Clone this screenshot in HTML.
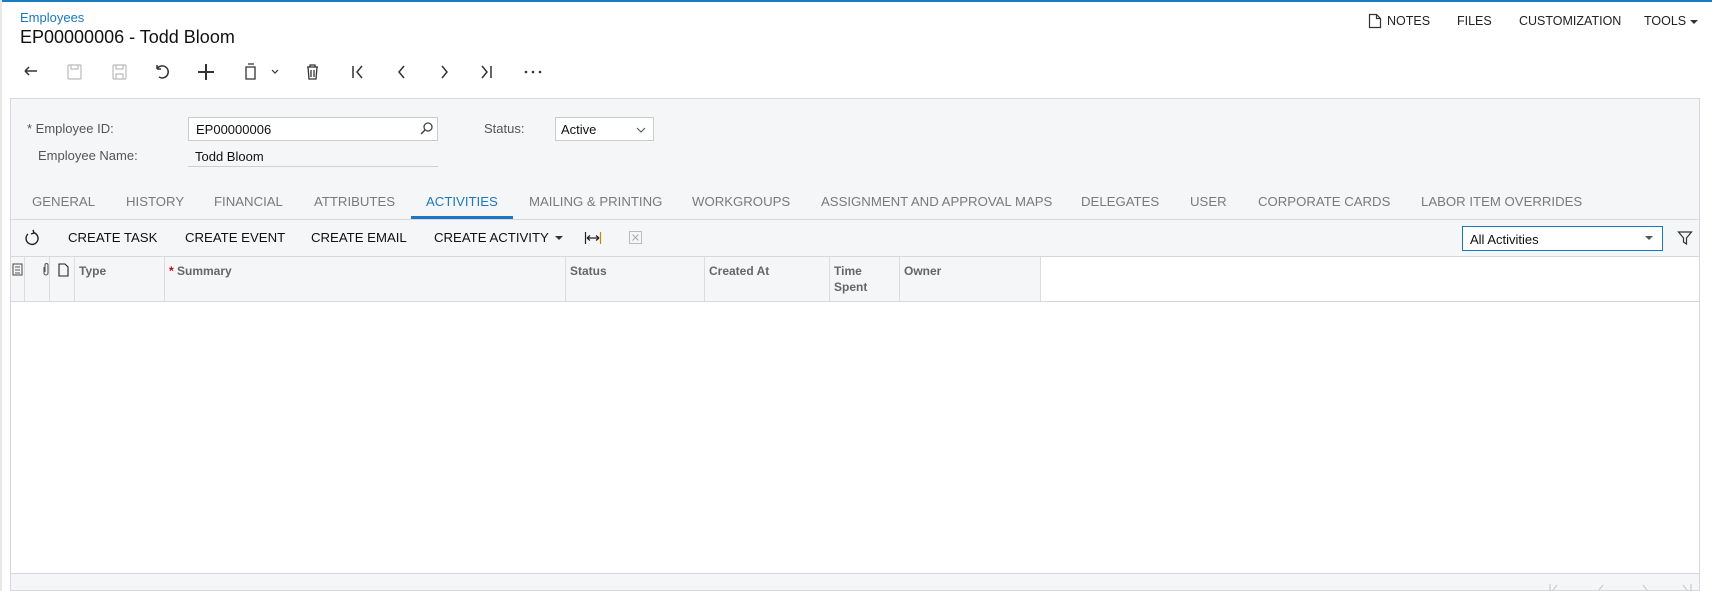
<!DOCTYPE html>
<html><head><meta charset="utf-8"><style>
*{margin:0;padding:0;box-sizing:border-box}
body{width:1712px;height:591px;background:#fff;font-family:"Liberation Sans",Arial,sans-serif;position:relative;overflow:hidden;color:#222}
.a{position:absolute;white-space:nowrap}
.tb{font-size:12.5px;color:#222;top:14px}
.tab{position:absolute;top:194px;font-size:13.2px;color:#7a7a7a}
.gt{position:absolute;top:230px;font-size:13.2px;color:#111}
.hd{position:absolute;top:257px;height:44px;border-right:1px solid #dcdcdc;font-size:12px;font-weight:bold;color:#666;padding:6px 4px;line-height:16px}
</style></head><body>
<div class="a" style="left:0;top:0;width:1712px;height:2px;background:#1a7bbf"></div>
<div class="a" style="left:0;top:0;width:2px;height:591px;background:#e8e8e8"></div>
<div class="a" style="left:20px;top:10px;font-size:13px;color:#1a78c2">Employees</div>
<div class="a" style="left:20px;top:27px;font-size:18px;color:#111">EP00000006 - Todd Bloom</div>

<svg class="a" style="left:1368px;top:13px" width="14" height="16" viewBox="0 0 14 16"><path d="M1.5 1.5h7l4 4v9h-11z M8.5 1.5v4h4" fill="none" stroke="#333" stroke-width="1.2"/></svg>
<div class="a tb" style="left:1387px">NOTES</div>
<div class="a tb" style="left:1457px">FILES</div>
<div class="a tb" style="left:1519px">CUSTOMIZATION</div>
<div class="a tb" style="left:1644px">TOOLS</div>
<div class="a" style="left:1690px;top:20px;border:4px solid transparent;border-top:4px solid #333;border-bottom:0"></div>

<svg class="a" style="left:0;top:60px" width="560" height="24" viewBox="0 0 560 24" fill="none" stroke="#333" stroke-width="1.5">
<path d="M25 11h12M25 11l4-4M25 11l4 4"/>
<g stroke="#bbb" stroke-width="1.2"><rect x="68" y="5" width="13" height="14" rx="1"/><path d="M71 5v4h7V5"/><rect x="113" y="5" width="13" height="14" rx="1"/><path d="M116 5v4h7V5M116 19v-5h7v5"/></g>
<path d="M157 9a6 6 0 1 1 2 8M157 9v-4M157 9h4"/>
<path d="M206 4v16M198 12h16" stroke-width="2"/>
<path d="M246 7h9v12h-9z M248 4h6" stroke-width="1.3"/><path d="M272 10l3 3 3-3" stroke-width="1.2"/>
<path d="M307 7h11M310 7v-2h5v2M308 7l1 12h7l1-12M311 10v7M314 10v7" stroke-width="1.3"/>
<path d="M353 6v12M362 6l-5 6 5 6"/>
<path d="M404 6l-5 6 5 6"/>
<path d="M442 6l5 6-5 6"/>
<path d="M482 6l5 6-5 6M491 6v12"/>
<g fill="#333" stroke="none"><circle cx="526" cy="12" r="1.3"/><circle cx="533" cy="12" r="1.3"/><circle cx="540" cy="12" r="1.3"/></g>
</svg>

<div class="a" style="left:10px;top:98px;width:1690px;height:493px;background:#f5f6f8;border:1px solid #d6d8db"></div>
<div class="a" style="left:27px;top:121px;font-size:13px;color:#555">* Employee ID:</div>
<div class="a" style="left:38px;top:148px;font-size:13px;color:#555">Employee Name:</div>
<div class="a" style="left:188px;top:117px;width:250px;height:24px;background:#fff;border:1px solid #ccc;font-size:13px;padding:4px 7px;color:#111">EP00000006</div>
<svg class="a" style="left:420px;top:121px" width="14" height="14" viewBox="0 0 14 14"><circle cx="8" cy="6" r="4" fill="none" stroke="#444" stroke-width="1.3"/><path d="M5 9l-4 4" stroke="#444" stroke-width="1.5"/></svg>
<div class="a" style="left:195px;top:149px;font-size:13px;color:#111">Todd Bloom</div>
<div class="a" style="left:188px;top:166px;width:250px;height:1px;background:#d0d0d0"></div>
<div class="a" style="left:484px;top:121px;font-size:13px;color:#555">Status:</div>
<div class="a" style="left:555px;top:117px;width:99px;height:24px;background:#fff;border:1px solid #ccc;font-size:13px;padding:4px 5px;color:#111">Active</div>
<svg class="a" style="left:636px;top:126px" width="10" height="8"><path d="M1 2l4 4 4-4" fill="none" stroke="#555" stroke-width="1.1"/></svg>

<div class="tab" style="left:32px">GENERAL</div>
<div class="tab" style="left:126px">HISTORY</div>
<div class="tab" style="left:214px">FINANCIAL</div>
<div class="tab" style="left:314px">ATTRIBUTES</div>
<div class="tab" style="left:426px;color:#1a78c2">ACTIVITIES</div>
<div class="tab" style="left:529px">MAILING &amp; PRINTING</div>
<div class="tab" style="left:692px">WORKGROUPS</div>
<div class="tab" style="left:821px">ASSIGNMENT AND APPROVAL MAPS</div>
<div class="tab" style="left:1081px">DELEGATES</div>
<div class="tab" style="left:1190px">USER</div>
<div class="tab" style="left:1258px">CORPORATE CARDS</div>
<div class="tab" style="left:1421px">LABOR ITEM OVERRIDES</div>
<div class="a" style="left:11px;top:219px;width:1688px;height:1px;background:#d6d8db"></div>
<div class="a" style="left:411px;top:216px;width:102px;height:3px;background:#1a78c2"></div>

<svg class="a" style="left:23px;top:229px" width="18" height="18" viewBox="0 0 18 18"><path d="M5 5a6 6 0 1 0 5-1.5M10 1l1 3-3 1" fill="none" stroke="#222" stroke-width="1.4"/></svg>
<div class="gt" style="left:68px">CREATE TASK</div>
<div class="gt" style="left:185px">CREATE EVENT</div>
<div class="gt" style="left:311px">CREATE EMAIL</div>
<div class="gt" style="left:434px">CREATE ACTIVITY</div>
<div class="a" style="left:555px;top:236px;border:4px solid transparent;border-top:4px solid #333;border-bottom:0"></div>
<svg class="a" style="left:584px;top:229px" width="18" height="18"><path d="M1.5 3v12M3 9h12M3 9l3-2.5M3 9l3 2.5M15 9l-3-2.5M15 9l-3 2.5" fill="none" stroke="#222" stroke-width="1.2"/><path d="M16.5 3v12" stroke="#c68a00" stroke-width="1.2"/></svg>
<svg class="a" style="left:628px;top:230px" width="16" height="16"><rect x="1.5" y="1.5" width="12" height="12" fill="none" stroke="#bbb"/><path d="M4.5 4.5l6 6M10.5 4.5l-6 6" stroke="#aaa"/></svg>
<div class="a" style="left:1462px;top:226px;width:201px;height:25px;background:#fff;border:1px solid #1a78c2;font-size:13px;padding:5px 7px;color:#111">All Activities</div>
<div class="a" style="left:1645px;top:236px;border:4px solid transparent;border-top:4px solid #555;border-bottom:0"></div>
<svg class="a" style="left:1677px;top:230px" width="16" height="16"><path d="M1.5 2h13l-5 6v6l-3-2V8z" fill="none" stroke="#333" stroke-width="1.2"/></svg>
<div class="a" style="left:11px;top:256px;width:1688px;height:1px;background:#d6d8db"></div>
<div class="a" style="left:1041px;top:257px;width:658px;height:44px;background:#fff"></div>

<div class="hd" style="left:10px;width:15px"></div>
<div class="hd" style="left:25px;width:25px"></div>
<div class="hd" style="left:50px;width:25px"></div>
<div class="hd" style="left:75px;width:90px">Type</div>
<div class="hd" style="left:165px;width:401px"><span style="color:#c00">*</span> Summary</div>
<div class="hd" style="left:566px;width:139px">Status</div>
<div class="hd" style="left:705px;width:125px">Created At</div>
<div class="hd" style="left:830px;width:70px">Time<br>Spent</div>
<div class="hd" style="left:900px;width:141px">Owner</div>
<svg class="a" style="left:11px;top:262px" width="75" height="16" fill="none" stroke="#555" stroke-width="1.1"><rect x="2" y="2" width="9" height="11"/><path d="M4 5h5M4 8h5M4 11h5"/><path d="M33 5v6a2 2 0 0 0 4 0V3a1.5 1.5 0 0 0-3 0v7" /><path d="M48 2h6l3 3v9h-9z" stroke="#222"/></svg>
<div class="a" style="left:11px;top:301px;width:1688px;height:273px;background:#fff;border-top:1px solid #d6d8db;border-bottom:1px solid #d6d8db"></div>
<svg class="a" style="left:1545px;top:584px" width="150" height="7" fill="none" stroke="#ccc" stroke-width="1.2"><path d="M5 0v7M12 1l-4 5M58 1l-4 5M98 1l4 5M138 1l4 5M146 0v7"/></svg>
</body></html>
